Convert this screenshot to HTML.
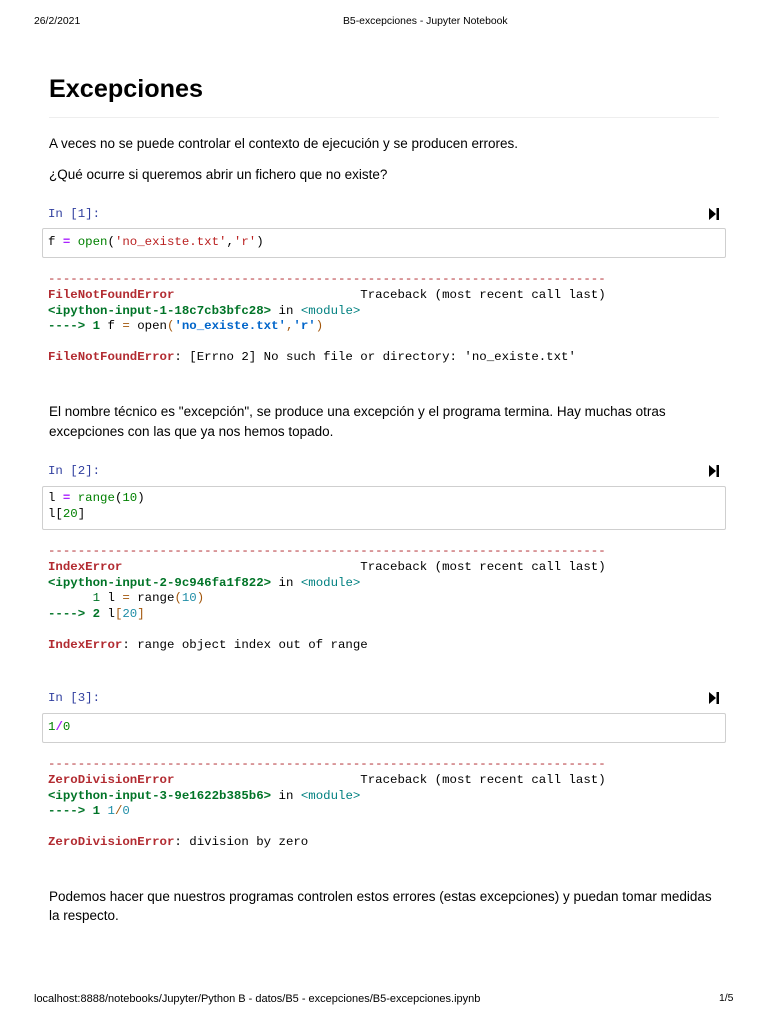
<!DOCTYPE html>
<html><head><meta charset="utf-8"><style>
body{margin:0;width:768px;height:1024px;background:#fff;position:relative;font-family:"Liberation Sans",sans-serif;color:#000}
.a{position:absolute;white-space:pre}
.s{font-size:13.5px;line-height:20px;left:49px}
.m{font-family:"Liberation Mono",monospace;font-size:12.4px;line-height:16px;left:48px}
.hd{font-size:10.4px;line-height:12px}
.in{color:#303f9f}
.box{position:absolute;left:42px;width:682px;border:1px solid #cfcfcf;border-radius:2px;background:#fff}
.r{color:#b22b31;font-weight:bold}.g{color:#007427;font-weight:bold}.gn{color:#007427}
.o{color:#a2560b}.b{color:#0065ca;font-weight:bold}.c{color:#208ea7}.t{color:#008080}
.st{color:#ba2121}.kw{color:#008000}.op{color:#aa22ff;font-weight:bold}.nu{color:#008000}
.run{position:absolute;left:709px;width:10px;height:12px}
</style></head><body>
<div class="a hd" style="left:34px;top:16px">26/2/2021</div>
<div class="a hd" style="left:343px;top:16px">B5-excepciones - Jupyter Notebook</div>
<div class="a" style="left:49px;top:73px;font-size:25.2px;font-weight:bold;line-height:32px">Excepciones</div>
<div style="position:absolute;left:49px;top:117px;width:670px;border-top:1px solid #eee"></div>
<div class="a s" style="top:134px">A veces no se puede controlar el contexto de ejecución y se producen errores.</div>
<div class="a s" style="top:165px">¿Qué ocurre si queremos abrir un fichero que no existe?</div>

<div class="a m in" style="top:206px">In [1]:</div>
<svg class="run" style="top:208px" viewBox="0 0 10 12"><path d="M0 0L7 6L0 12Z" fill="#000"/><rect x="7.5" y="0" width="2.5" height="12"/></svg>
<div class="box" style="top:228px;height:28px"></div>
<div class="a m" style="top:234px">f <span class="op">=</span> <span class="kw">open</span>(<span class="st">'no_existe.txt'</span>,<span class="st">'r'</span>)</div>
<div class="a m" style="top:271px;color:#b22b31">---------------------------------------------------------------------------</div>
<div class="a m" style="top:287px"><span class="r">FileNotFoundError</span>                         Traceback (most recent call last)</div>
<div class="a m" style="top:303px"><span class="g">&lt;ipython-input-1-18c7cb3bfc28&gt;</span> in <span class="t">&lt;module&gt;</span></div>
<div class="a m" style="top:318px"><span class="g">----&gt; 1</span> f <span class="o">=</span> open<span class="o">(</span><span class="b">'no_existe.txt'</span><span class="o">,</span><span class="b">'r'</span><span class="o">)</span></div>
<div class="a m" style="top:349px"><span class="r">FileNotFoundError</span>: [Errno 2] No such file or directory: 'no_existe.txt'</div>

<div class="a s" style="top:402px">El nombre técnico es "excepción", se produce una excepción y el programa termina. Hay muchas otras</div>
<div class="a s" style="top:422px">excepciones con las que ya nos hemos topado.</div>

<div class="a m in" style="top:463px">In [2]:</div>
<svg class="run" style="top:465px" viewBox="0 0 10 12"><path d="M0 0L7 6L0 12Z" fill="#000"/><rect x="7.5" y="0" width="2.5" height="12"/></svg>
<div class="box" style="top:486px;height:42px"></div>
<div class="a m" style="top:490px">l <span class="op">=</span> <span class="kw">range</span>(<span class="nu">10</span>)
l[<span class="nu">20</span>]</div>
<div class="a m" style="top:543px;color:#b22b31">---------------------------------------------------------------------------</div>
<div class="a m" style="top:559px"><span class="r">IndexError</span>                                Traceback (most recent call last)</div>
<div class="a m" style="top:575px"><span class="g">&lt;ipython-input-2-9c946fa1f822&gt;</span> in <span class="t">&lt;module&gt;</span></div>
<div class="a m" style="top:590px"><span class="gn">      1</span> l <span class="o">=</span> range<span class="o">(</span><span class="c">10</span><span class="o">)</span></div>
<div class="a m" style="top:606px"><span class="g">----&gt; 2</span> l<span class="o">[</span><span class="c">20</span><span class="o">]</span></div>
<div class="a m" style="top:637px"><span class="r">IndexError</span>: range object index out of range</div>

<div class="a m in" style="top:690px">In [3]:</div>
<svg class="run" style="top:692px" viewBox="0 0 10 12"><path d="M0 0L7 6L0 12Z" fill="#000"/><rect x="7.5" y="0" width="2.5" height="12"/></svg>
<div class="box" style="top:713px;height:28px"></div>
<div class="a m" style="top:719px"><span class="nu">1</span><span class="op">/</span><span class="nu">0</span></div>
<div class="a m" style="top:756px;color:#b22b31">---------------------------------------------------------------------------</div>
<div class="a m" style="top:772px"><span class="r">ZeroDivisionError</span>                         Traceback (most recent call last)</div>
<div class="a m" style="top:788px"><span class="g">&lt;ipython-input-3-9e1622b385b6&gt;</span> in <span class="t">&lt;module&gt;</span></div>
<div class="a m" style="top:803px"><span class="g">----&gt; 1</span> <span class="c">1</span><span class="o">/</span><span class="c">0</span></div>
<div class="a m" style="top:834px"><span class="r">ZeroDivisionError</span>: division by zero</div>

<div class="a s" style="top:887px">Podemos hacer que nuestros programas controlen estos errores (estas excepciones) y puedan tomar medidas</div>
<div class="a s" style="top:906px">la respecto.</div>

<div class="a hd" style="left:34px;top:993px;font-size:11px">localhost:8888/notebooks/Jupyter/Python B - datos/B5 - excepciones/B5-excepciones.ipynb</div>
<div class="a hd" style="left:719px;top:993px">1/5</div>
</body></html>
